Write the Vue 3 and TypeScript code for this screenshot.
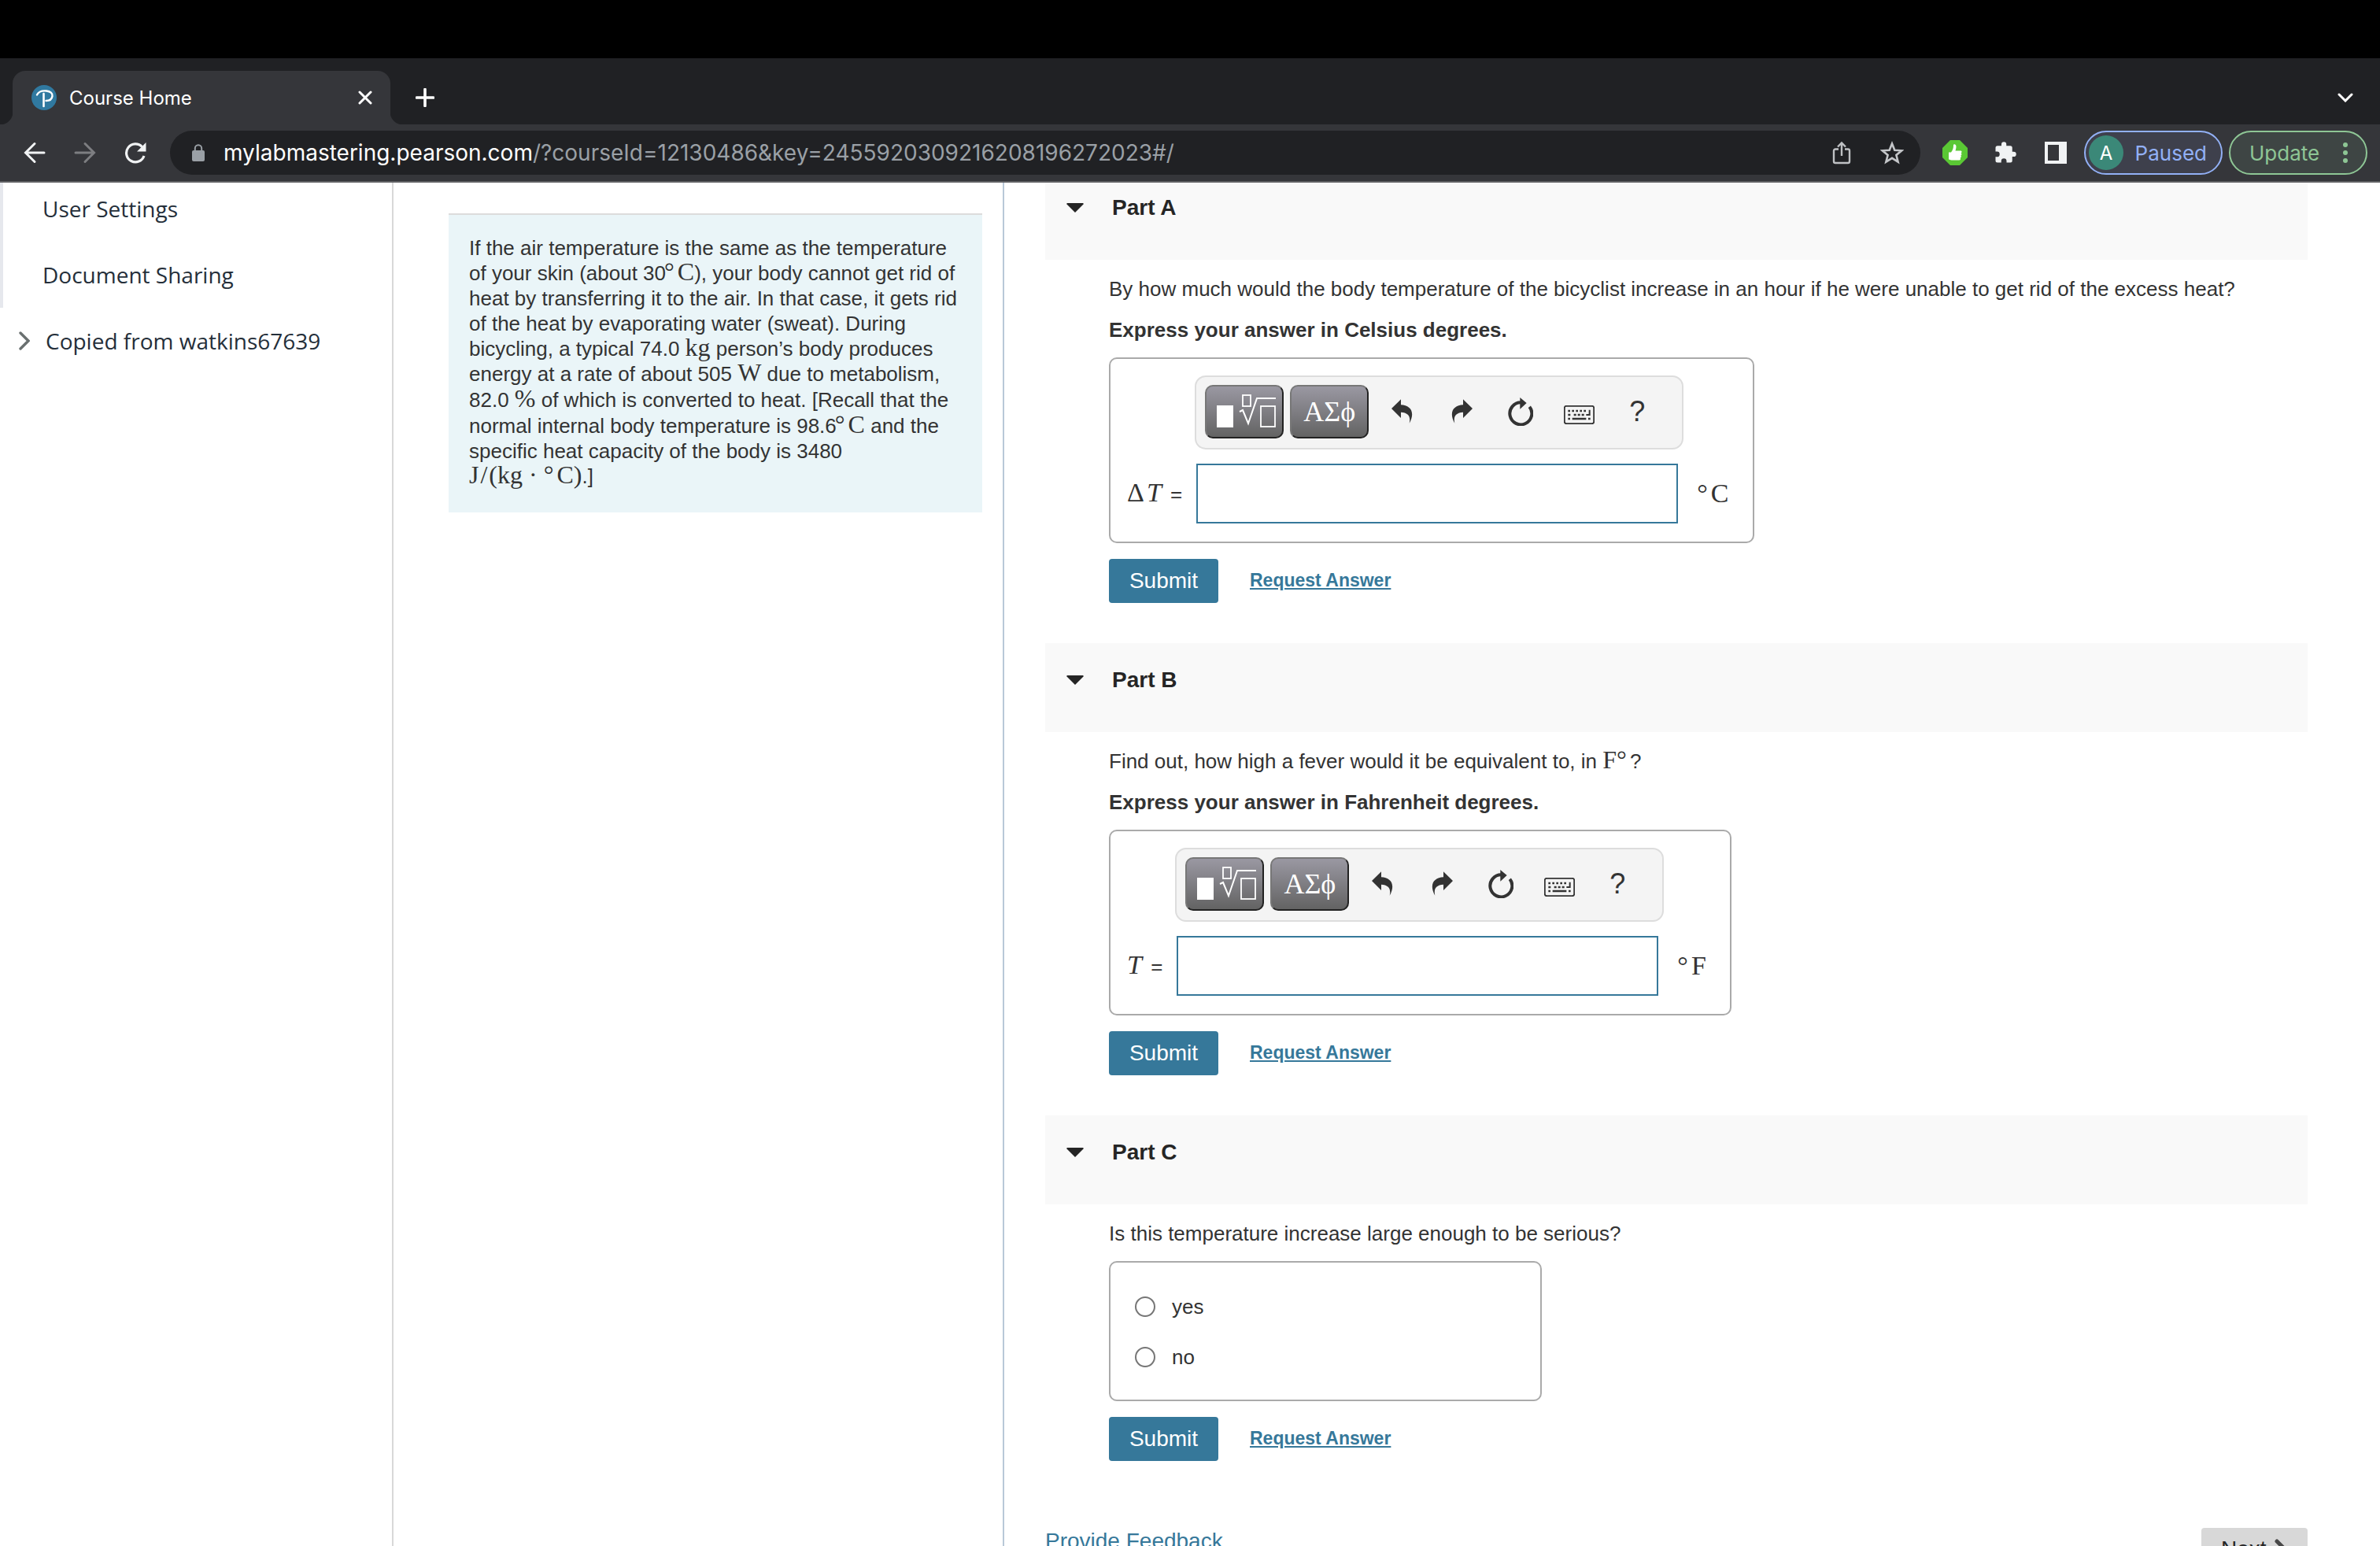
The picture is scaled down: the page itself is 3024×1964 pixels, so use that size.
<script setup lang="ts">
import { ref } from 'vue'

interface AnswerPart {
  id: string
  title: string
  symbol: string
  delta: boolean
  unit: string
  instruction: string
}

const url = { host: 'mylabmastering.pearson.com', path: '/?courseId=12130486&key=2455920309216208196272023#/' }

const numericParts: AnswerPart[] = [
  { id: 'a', title: 'Part A', symbol: 'T', delta: true, unit: 'C', instruction: 'Express your answer in Celsius degrees.' },
  { id: 'b', title: 'Part B', symbol: 'T', delta: false, unit: 'F', instruction: 'Express your answer in Fahrenheit degrees.' },
]

const answers = ref<Record<string, string>>({ a: '', b: '' })
const options = ['yes', 'no']
const choice = ref('')
</script>

<template>
  <div class="window">
    <div class="menu-bar"></div>

    <header class="browser">
      <div class="tab-strip">
        <div class="tab">
          <svg class="favicon" viewBox="0 0 32 32" aria-hidden="true">
            <circle cx="16" cy="16" r="16" fill="#3079a0" />
            <path d="M7 12.500C9 8.500 14 7 19 7.500C24 8 27 10.500 26.500 14C26 18 22.500 20 18.500 20" fill="none" stroke="#fff" stroke-width="2.400" stroke-linecap="round" />
            <path d="M15.500 11V27" stroke="#fff" stroke-width="2.600" stroke-linecap="round" />
          </svg>
          <span class="tab-title">Course Home</span>
          <button class="icon-btn tab-close" aria-label="Close tab">
            <svg width="18" height="18" viewBox="0 0 18 18"><path d="M2 2L16 16M16 2L2 16" stroke="#fff" stroke-width="3" stroke-linecap="round" /></svg>
          </button>
        </div>
        <button class="icon-btn new-tab" aria-label="New tab">
          <svg width="24" height="24" viewBox="0 0 24 24"><path d="M12 1.500V22.500M1.500 12H22.500" stroke="#fff" stroke-width="3.600" stroke-linecap="round" /></svg>
        </button>
        <button class="icon-btn tab-search" aria-label="Search tabs">
          <svg width="20" height="12" viewBox="0 0 20 12"><path d="M2 2L10 10L18 2" fill="none" stroke="#fff" stroke-width="3" stroke-linecap="round" /></svg>
        </button>
      </div>

      <div class="toolbar">
        <button class="icon-btn nav" aria-label="Back">
          <svg width="28" height="28" viewBox="0 0 28 28"><path d="M26 14H3M14 2.500L2.500 14L14 25.500" fill="none" stroke="#f1f3f4" stroke-width="3" stroke-linecap="round" /></svg>
        </button>
        <button class="icon-btn nav" aria-label="Forward">
          <svg width="28" height="28" viewBox="0 0 28 28"><path d="M2 14H25M14 2.500L25.500 14L14 25.500" fill="none" stroke="#7d7e81" stroke-width="3" stroke-linecap="round" /></svg>
        </button>
        <button class="icon-btn nav" aria-label="Reload">
          <svg width="28" height="28" viewBox="0 0 28 28"><path d="M25 18A11.500 11.500 0 1 1 22.500 6.500" fill="none" stroke="#f1f3f4" stroke-width="3.200" /><path d="M27.500 1V12.500H16Z" fill="#f1f3f4" /></svg>
        </button>
        <div class="address">
          <svg class="lock" width="16" height="22" viewBox="0 0 16 22" aria-hidden="true"><path d="M3.800 9V5.500a4.200 4.200 0 0 1 8.400 0V9" fill="none" stroke="#9aa0a6" stroke-width="2" /><rect y="8" width="16" height="14" rx="2" fill="#9aa0a6" /></svg>
          <div class="url"><span class="host">{{ url.host }}</span>{{ url.path }}</div>
          <button class="icon-btn nav" aria-label="Share">
            <svg width="24" height="30" viewBox="0 0 24 30" fill="none" stroke="#bfc1c4" stroke-width="2.400"><path d="M8 10.500H4a2 2 0 0 0-2 2V26a2 2 0 0 0 2 2H20a2 2 0 0 0 2-2V12.500a2 2 0 0 0-2-2H16M12 19V2.500M7 7.500L12 2.500L17 7.500" /></svg>
          </button>
          <button class="icon-btn nav" aria-label="Bookmark">
            <svg width="30" height="30" viewBox="0 0 30 30"><path d="M15 3.500L18.300 11.700L27.200 12.300L20.400 18L22.600 26.700L15 21.900L7.400 26.700L9.600 18L2.800 12.300L11.700 11.700Z" fill="none" stroke="#c4c6c9" stroke-width="2.600" /></svg>
          </button>
        </div>
        <button class="icon-btn nav" aria-label="Thumbs up extension">
          <svg width="32" height="32" viewBox="0 0 32 32"><path d="M10 0H22L32 10V22L22 32H10L0 22V10Z" fill="#5ac834" /><path d="M8 15.500H11C13 13 14 10.500 14 6.500C14 4.500 17.300 4.500 17.500 8C17.500 10 17 12 16.500 13.500H23C25 13.500 25 16 23.500 16.500C25 17 24.500 19.200 23.300 19.500C24.300 20.200 24 22.200 22.700 22.500C23.500 23.500 22.800 25.500 21.500 25.500H13C11 25.500 9.500 25 8 24.500Z" fill="#fff" /></svg>
        </button>
        <button class="icon-btn nav" aria-label="Extensions">
          <svg width="30" height="30" viewBox="0 0 24 24"><path d="M20.500 11H19V7a2 2 0 0 0-2-2h-4V3.500a2.500 2.500 0 0 0-5 0V5H4a2 2 0 0 0-2 2v3.800h1.500a2.700 2.700 0 0 1 0 5.400H2V20a2 2 0 0 0 2 2h3.800v-1.500a2.700 2.700 0 0 1 5.400 0V22H17a2 2 0 0 0 2-2v-4h1.500a2.500 2.500 0 0 0 0-5z" fill="#f1f3f4" /></svg>
        </button>
        <button class="icon-btn nav" aria-label="Side panel">
          <svg width="28" height="28" viewBox="0 0 28 28"><path fill-rule="evenodd" d="M0 0H28V28H0ZM4 4V24H18V4Z" fill="#f1f3f4" /></svg>
        </button>
        <button class="chip paused"><span class="avatar">A</span>Paused</button>
        <button class="chip update">Update
          <svg width="6" height="26" viewBox="0 0 6 26" aria-hidden="true"><circle cx="3" cy="3" r="3" /><circle cx="3" cy="13" r="3" /><circle cx="3" cy="23" r="3" /></svg>
        </button>
      </div>
    </header>

    <div class="page">
      <nav class="sidebar">
        <div class="submenu">
          <a href="#settings">User Settings</a>
          <a href="#sharing">Document Sharing</a>
        </div>
        <a class="group" href="#copied">
          <svg width="14" height="24" viewBox="0 0 14 24" aria-hidden="true"><path d="M2 2L12 12L2 22" fill="none" stroke="#6a7070" stroke-width="3.400" stroke-linecap="round" /></svg>
          Copied from watkins67639
        </a>
      </nav>

      <aside class="intro">
        <p>
          If the air temperature is the same as the temperature<br />
          of your skin (about 30<span class="math"><span class="degree tight">°</span>C</span>), your body cannot get rid of<br />
          heat by transferring it to the air. In that case, it gets rid<br />
          of the heat by evaporating water (sweat). During<br />
          bicycling, a typical 74.0 <span class="math">kg</span> person’s body produces<br />
          energy at a rate of about 505 <span class="math">W</span> due to metabolism,<br />
          82.0 <span class="math tall">%</span> of which is converted to heat. [Recall that the<br />
          normal internal body temperature is 98.6<span class="math tall"><span class="degree tight">°</span>C</span> and the<br />
          specific heat capacity of the body is 3480<br />
          <span class="math">J<span class="slash">/</span>(kg · <span class="degree">°</span>C)</span>.]
        </p>
      </aside>

      <main class="parts">
        <section v-for="part in numericParts" :key="part.id" class="part">
          <h2><svg width="22" height="12" viewBox="0 0 22 12" aria-hidden="true"><path d="M1 0H21L22 1L11 12L0 1Z" fill="#252525" /></svg>{{ part.title }}</h2>
          <div class="body">
            <p v-if="part.id === 'a'">By how much would the body temperature of the bicyclist increase in an hour if he were unable to get rid of the excess heat?</p>
            <p v-else>Find out, how high a fever would it be equivalent to, in <span class="math">F<span class="degree">°</span></span>?</p>
            <p class="instruction">{{ part.instruction }}</p>
            <div class="answer">
              <div class="tools">
                <button class="tool dark" aria-label="Templates">
                  <svg width="96" height="64" viewBox="2 2 96 64" fill="none" stroke="#fff" stroke-width="1.800"><rect x="15" y="26" width="21" height="28" fill="#fff" stroke="none" /><rect x="48" y="13" width="10" height="14" /><path d="M44 34L48 32L55 49L66 17H90" stroke-width="2" /><rect x="71" y="27" width="18" height="26" /></svg>
                </button>
                <button class="tool dark greek">ΑΣϕ</button>
                <button class="tool flat undo" aria-label="Undo">
                  <svg width="28" height="32" viewBox="774 112 84 94"><path d="M774 147L810 112V133C846 135 866 160 842 203C848 176 838 163 810 161V183Z" fill="#333" /></svg>
                </button>
                <button class="tool flat" aria-label="Redo">
                  <svg width="28" height="32" viewBox="774 112 84 94"><path d="M855 147L819 112V133C783 135 763 160 787 203C781 176 791 163 819 161V183Z" fill="#333" /></svg>
                </button>
                <button class="tool flat" aria-label="Reset">
                  <svg width="32" height="36" viewBox="525 105 96 108"><path d="M575 124A42 42 0 1 0 607 140" fill="none" stroke="#333" stroke-width="12" /><path d="M571 105V149L596 126Z" fill="#333" /></svg>
                </button>
                <button class="tool flat keys" aria-label="Keyboard shortcuts">
                  <svg width="39" height="24" viewBox="737 138 117 72"><rect x="739.500" y="140.500" width="112" height="67" rx="7" fill="none" stroke="#333" stroke-width="5.500" /><path d="M753 159H825" stroke="#333" stroke-width="7" stroke-dasharray="8 7" /><path d="M753 174H766M775 174H818" stroke="#333" stroke-width="7" stroke-dasharray="9 6" /><path d="M835 155V174H822" fill="none" stroke="#333" stroke-width="6" /><path d="M753 189H761M769 189H822M830 189H838" stroke="#333" stroke-width="7" /></svg>
                </button>
                <button class="tool flat help">?</button>
              </div>
              <label class="lead" :for="'answer-' + part.id"><span v-if="part.delta" class="var delta">Δ</span><i class="var">{{ part.symbol }}</i> =</label>
              <input :id="'answer-' + part.id" v-model="answers[part.id]" class="field" type="text" />
              <span class="var unit"><span class="degree">°</span>{{ part.unit }}</span>
            </div>
            <div class="actions">
              <button class="submit">Submit</button>
              <a href="#answer">Request Answer</a>
            </div>
          </div>
        </section>

        <section class="part">
          <h2><svg width="22" height="12" viewBox="0 0 22 12" aria-hidden="true"><path d="M1 0H21L22 1L11 12L0 1Z" fill="#252525" /></svg>Part C</h2>
          <div class="body">
            <p>Is this temperature increase large enough to be serious?</p>
            <div class="choices">
              <label v-for="option in options" :key="option"><input v-model="choice" type="radio" name="serious" :value="option" />{{ option }}</label>
            </div>
            <div class="actions">
              <button class="submit">Submit</button>
              <a href="#answer">Request Answer</a>
            </div>
          </div>
        </section>

        <footer class="pager">
          <a href="#feedback">Provide Feedback</a>
          <button class="next">Next
            <svg width="16" height="26" viewBox="0 0 16 26" aria-hidden="true"><path d="M3 3L13 13L3 23" fill="none" stroke="#484848" stroke-width="5" stroke-linecap="round" /></svg>
          </button>
        </footer>
      </main>
    </div>
  </div>
</template>

<style>
body {
  margin: 0;
  overflow: hidden;
  background: #fff;
}
</style>

<style scoped>
.window {
  display: flex;
  flex-direction: column;
  height: 100vh;
  overflow: hidden;
  font-family: "Liberation Sans", Arial, sans-serif;
  color: #333;
}
button {
  border: 0;
  padding: 0;
  background: none;
  font: inherit;
  cursor: pointer;
}
svg {
  display: block;
  flex: none;
}
p,
h2 {
  margin: 0;
}

/* Browser chrome */
.menu-bar {
  flex: none;
  height: 74px;
  background: #000;
}
.browser {
  flex: none;
  background: #35363a;
  border-bottom: 2px solid #5f6063;
  font-family: Inter, "Liberation Sans", sans-serif;
}
.tab-strip {
  display: flex;
  align-items: stretch;
  height: 68px;
  padding: 16px 26px 0 16px;
  background: #202124;
}
.tab {
  position: relative;
  display: flex;
  align-items: center;
  width: 480px;
  box-sizing: border-box;
  padding: 0 16px 0 24px;
  border-radius: 16px 16px 0 0;
  background: #35363a;
  color: #fff;
  font-size: 24px;
}
.tab::before,
.tab::after {
  content: "";
  position: absolute;
  bottom: 0;
  width: 16px;
  height: 16px;
}
.tab::before {
  right: 100%;
  background: radial-gradient(circle at 0 0, #202124 16px, #35363a 17px);
}
.tab::after {
  left: 100%;
  background: radial-gradient(circle at 100% 0, #202124 16px, #35363a 17px);
}
.favicon {
  width: 32px;
  height: 32px;
}
.tab-title {
  margin-left: 16px;
}
.icon-btn {
  display: flex;
  align-items: center;
  justify-content: center;
}
.tab-close {
  width: 32px;
  margin-left: auto;
}
.new-tab {
  width: 40px;
  margin-left: 24px;
}
.tab-search {
  width: 36px;
  margin-left: auto;
}
.toolbar {
  display: flex;
  align-items: center;
  height: 72px;
  padding: 0 16px 0 12px;
}
.nav {
  flex: none;
  width: 64px;
  height: 56px;
}
.address {
  display: flex;
  flex: 1;
  align-items: center;
  height: 56px;
  margin: 0 12px;
  padding: 0 4px 0 28px;
  box-sizing: border-box;
  border-radius: 28px;
  background: #202124;
}
.url {
  flex: 1;
  margin-left: 24px;
  color: #9aa0a6;
  font-size: 28px;
  white-space: nowrap;
}
.host {
  color: #fff;
}
.chip {
  display: flex;
  align-items: center;
  justify-content: space-between;
  width: 176px;
  height: 56px;
  box-sizing: border-box;
  border: 2px solid;
  border-radius: 28px;
  font-size: 26px;
}
.paused {
  margin: 0 8px 0 4px;
  padding: 0 18px 0 4px;
  background: #3e404c;
  color: #92b0f5;
}
.avatar {
  display: flex;
  align-items: center;
  justify-content: center;
  width: 44px;
  height: 44px;
  border-radius: 50%;
  background: #3b8878;
  color: #fff;
  font-size: 24px;
}
.update {
  padding: 0 23px 0 24px;
  background: #3e4544;
  color: #8ec695;
}
.update svg {
  fill: currentColor;
}

/* Page */
.page {
  display: flex;
  flex: 1;
  min-height: 0;
}
.sidebar {
  flex: none;
  width: 500px;
  box-sizing: border-box;
  border-right: 2px solid #d8d8d8;
  font-family: "Open Sans", sans-serif;
  font-size: 28px;
}
.sidebar a {
  color: #252f3a;
  text-decoration: none;
}
.submenu {
  display: flex;
  flex-direction: column;
  gap: 44px;
  padding: 13px 0 22px 50px;
  border-left: 4px solid #e6e8ed;
}
.submenu a {
  line-height: 40px;
}
.group {
  display: flex;
  align-items: center;
  gap: 20px;
  padding: 22px 0 0 24px;
  line-height: 40px;
}
.intro {
  flex: none;
  width: 776px;
  box-sizing: border-box;
  padding: 39px 26px 0 70px;
  border-right: 2px solid #b9c8d8;
}
.intro p {
  padding: 26px 0 30px 26px;
  border-top: 2px solid #dcdcdc;
  background: #eaf5f8;
  font-size: 26px;
  line-height: 32px;
  white-space: nowrap;
}
.math {
  font-family: "Liberation Serif", serif;
  font-size: 32px;
  line-height: 0;
}
.tall {
  line-height: 30px;
}
.degree {
  margin-right: 4px;
}
.tight {
  margin-left: -2px;
}
.slash {
  margin: 0 2px;
}
.parts {
  flex: 1;
  min-width: 0;
  padding: 0 92px 0 52px;
}
.part {
  padding-bottom: 51px;
}
h2 {
  display: flex;
  align-items: center;
  gap: 36px;
  padding: 31px 27px 50px;
  background: #f9f9f9;
  color: #252525;
  font-size: 28px;
  line-height: 32px;
}
.part:first-child h2 {
  padding-top: 16px;
}
.body {
  padding: 21px 0 0 81px;
  font-size: 26px;
  line-height: 32px;
}
.instruction {
  margin-top: 20px;
  font-weight: bold;
}
.answer {
  display: grid;
  grid-template-columns: auto 612px auto;
  align-items: center;
  row-gap: 18px;
  width: fit-content;
  height: 236px;
  box-sizing: border-box;
  align-content: start;
  margin-top: 19px;
  padding: 21px 30px 0 21px;
  border: 2px solid #aaa;
  border-radius: 10px;
}
.tools {
  grid-column: 2 / 4;
  justify-self: start;
  display: flex;
  width: 621px;
  height: 94px;
  box-sizing: border-box;
  margin-left: -2px;
  padding: 10px 11px;
  border: 2px solid #ddd;
  border-radius: 14px;
  background: #f4f4f4;
}
.tool {
  display: flex;
  align-items: center;
  justify-content: center;
  height: 68px;
  color: #333;
}
.dark {
  width: 100px;
  margin-right: 8px;
  border: 2px solid;
  border-color: #777 #222 #222 #777;
  border-radius: 10px;
  background: linear-gradient(#9a98a2, #636363);
  color: #fff;
}
.greek {
  font-family: "Liberation Serif", serif;
  font-size: 36px;
}
.flat {
  width: 74px;
}
.undo {
  margin: 0 2px 0 -2px;
}
.keys {
  padding-top: 8px;
}
.help {
  font-size: 36px;
}
.lead {
  padding-right: 18px;
}
.lead i {
  margin-right: 4px;
}
.var {
  font-family: "Liberation Serif", serif;
  font-size: 34px;
}
.delta {
  margin-right: 3px;
}
.field {
  width: 612px;
  height: 76px;
  box-sizing: border-box;
  padding: 0 12px;
  border: 2px solid #36789a;
  border-radius: 0;
  background: #fff;
  font: inherit;
  outline: none;
}
.unit {
  margin-left: 24px;
}
.choices {
  display: flex;
  flex-direction: column;
  gap: 32px;
  width: 550px;
  height: 178px;
  box-sizing: border-box;
  margin-top: 19px;
  padding: 40px 31px;
  border: 2px solid #aaa;
  border-radius: 10px;
}
.choices label {
  display: flex;
  align-items: center;
}
.choices input {
  appearance: none;
  width: 26px;
  height: 26px;
  margin: 0 21px 0 0;
  border: 2px solid #767676;
  border-radius: 50%;
  background: #fff;
}
.choices input:checked {
  border-width: 8px;
}
.actions {
  display: flex;
  align-items: center;
  gap: 40px;
  margin-top: 20px;
}
.submit {
  width: 139px;
  height: 56px;
  border-radius: 4px;
  background: #36789a;
  color: #fff;
  font-size: 28px;
}
.actions a {
  padding-bottom: 2px;
  color: #36789a;
  font-size: 23px;
  font-weight: bold;
}
.pager {
  display: flex;
  align-items: flex-start;
  justify-content: space-between;
  margin-top: 34px;
  font-size: 28px;
  line-height: 34px;
}
.pager a {
  color: #36789a;
  text-decoration: none;
}
.next {
  display: flex;
  align-items: center;
  gap: 10px;
  width: 135px;
  height: 54px;
  padding-left: 25px;
  border-radius: 4px;
  background: #d8d8d8;
  color: #252525;
}
</style>
